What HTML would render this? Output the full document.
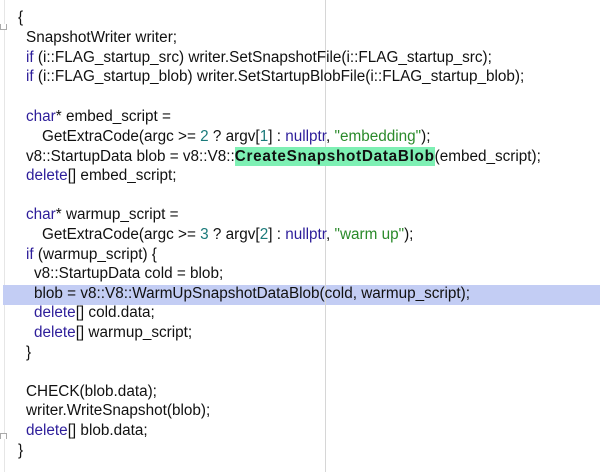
<!DOCTYPE html><html><head><style>
body{margin:0;width:600px;height:472px;background:#fff;position:relative;overflow:hidden;font-family:"Liberation Sans",sans-serif;font-size:15.3px;color:#111}
.l{position:absolute;white-space:pre;height:20px;line-height:20px}
.k{color:#2d1d9a}.n{color:#1a7a7a}.s{color:#2a8a2a}
.vl{position:absolute;left:325px;top:0;width:1px;height:472px;background:#d6d6d6}
.gl{position:absolute;left:4px;top:0;width:1px;height:472px;background:#e6e6e6}
.hl{position:absolute;left:3px;top:285px;width:597px;height:20px;background:#c3cdf4}
.g{background:#7ef0b4;font-weight:bold;padding:1px 0;letter-spacing:0.7px}
</style></head><body>
<div class="gl"></div>
<div class="hl"></div>
<div class="vl"></div>
<div style="position:absolute;left:0;top:24px;width:5px;height:5px;border:1px solid #aaa;border-top:none;background:#fff"></div>
<div style="position:absolute;left:0;top:433px;width:5px;height:5px;border:1px solid #aaa;border-bottom:none;background:#fff"></div>
<div class="l" style="left:18px;top:8px">{</div>
<div class="l" style="left:26px;top:28px">SnapshotWriter writer;</div>
<div class="l" style="left:26px;top:48px"><span class="k">if</span> (i::FLAG_startup_src) writer.SetSnapshotFile(i::FLAG_startup_src);</div>
<div class="l" style="left:26px;top:67px"><span class="k">if</span> (i::FLAG_startup_blob) writer.SetStartupBlobFile(i::FLAG_startup_blob);</div>
<div class="l" style="left:26px;top:107px"><span class="k">char</span>* embed_script =</div>
<div class="l" style="left:42px;top:127px">GetExtraCode(argc &gt;= <span class="n">2</span> ? argv[<span class="n">1</span>] : <span class="k">nullptr</span>, <span class="s">"embedding"</span>);</div>
<div class="l" style="left:26px;top:147px">v8::StartupData blob = v8::V8::<span class="g">CreateSnapshotDataBlob</span>(embed_script);</div>
<div class="l" style="left:26px;top:166px"><span class="k">delete</span>[] embed_script;</div>
<div class="l" style="left:26px;top:205px"><span class="k">char</span>* warmup_script =</div>
<div class="l" style="left:42px;top:225px">GetExtraCode(argc &gt;= <span class="n">3</span> ? argv[<span class="n">2</span>] : <span class="k">nullptr</span>, <span class="s">"warm up"</span>);</div>
<div class="l" style="left:26px;top:245px"><span class="k">if</span> (warmup_script) {</div>
<div class="l" style="left:34px;top:264px">v8::StartupData cold = blob;</div>
<div class="l" style="left:34px;top:284px">blob = v8::V8::WarmUpSnapshotDataBlob(cold, warmup_script);</div>
<div class="l" style="left:34px;top:303px"><span class="k">delete</span>[] cold.data;</div>
<div class="l" style="left:34px;top:323px"><span class="k">delete</span>[] warmup_script;</div>
<div class="l" style="left:26px;top:343px">}</div>
<div class="l" style="left:26px;top:382px">CHECK(blob.data);</div>
<div class="l" style="left:26px;top:401px">writer.WriteSnapshot(blob);</div>
<div class="l" style="left:26px;top:421px"><span class="k">delete</span>[] blob.data;</div>
<div class="l" style="left:18px;top:441px">}</div>
</body></html>
